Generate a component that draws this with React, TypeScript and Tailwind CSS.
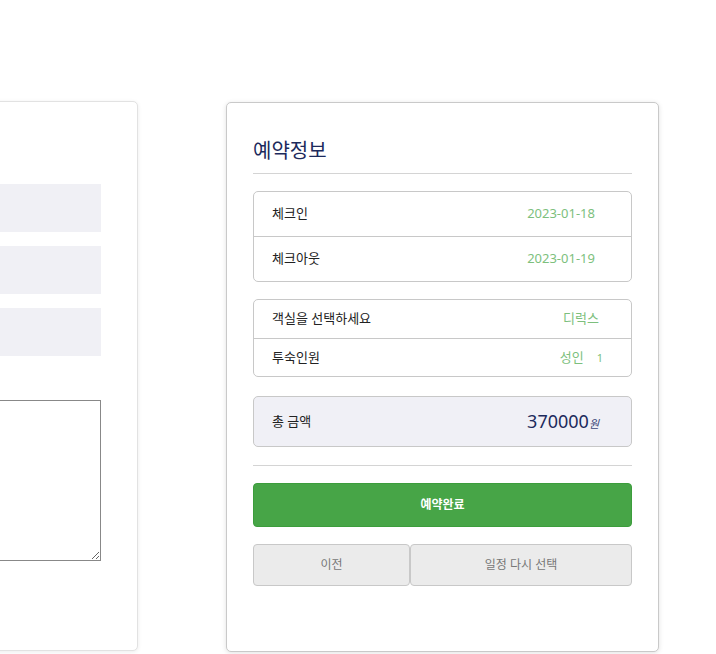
const font = { fontFamily: '"Noto Sans", "Noto Sans CJK KR", sans-serif' };

function InfoRow({ label, children, last }: { label: string; children: React.ReactNode; last?: boolean }) {
  return (
    <div className={`flex items-center justify-between pl-[18px] pr-[36px] ${last ? 'h-[44px]' : 'h-[45px] border-b border-[#c8c8c8]'}`}>
      <span className="text-[13px] text-[#222]">{label}</span>
      <span className="text-[13px] text-[#7dbf7d]">{children}</span>
    </div>
  );
}

function GuestForm() {
  return (
    <div className="w-[400px] h-[550px] ml-[-262px] shrink-0 bg-white border border-[#e2e2e2] rounded-[5px] shadow-[0_1px_4px_rgba(0,0,0,0.08)] pt-[82px] pr-[36px]">
      <div className="flex flex-col gap-[14px]">
        <div className="h-[48px] bg-[#f0f0f5]" />
        <div className="h-[48px] bg-[#f0f0f5]" />
        <div className="h-[48px] bg-[#f0f0f5]" />
      </div>
      <textarea className="mt-[44px] w-full h-[161px] block border border-[#888] bg-white" />
    </div>
  );
}

function Summary() {
  return (
    <div className="w-[433px] h-[550px] shrink-0 bg-white border border-[#c9c9c9] rounded-[5px] shadow-[0_1px_5px_rgba(0,0,0,0.12)] px-[26px] pt-[33px]">
      <h2 className="text-[20px] leading-[30px] text-[#1c2a5c] pb-[7px] border-b border-[#d4d4d4]">예약정보</h2>

      <div className="mt-[17px] border border-[#c8c8c8] rounded-[5px]">
        <InfoRow label="체크인">2023-01-18</InfoRow>
        <InfoRow label="체크아웃" last>2023-01-19</InfoRow>
      </div>

      <div className="mt-[17px] border border-[#c8c8c8] rounded-[5px]">
        <div className="flex items-center justify-between pl-[18px] pr-[32px] h-[39px] border-b border-[#c8c8c8]">
          <span className="text-[13px] text-[#222]">객실을 선택하세요</span>
          <span className="text-[13px] text-[#7dbf7d]">디럭스</span>
        </div>
        <div className="flex items-center justify-between pl-[18px] pr-[28px] h-[37px]">
          <span className="text-[13px] text-[#222]">투숙인원</span>
          <span className="text-[13px] text-[#7dbf7d]">
            성인<span className="ml-[13px] text-[11px]">1</span>
          </span>
        </div>
      </div>

      <div className="mt-[19px] h-[51px] flex items-center justify-between pl-[18px] pr-[32px] bg-[#f0f0f6] border border-[#c8c8c8] rounded-[5px]">
        <span className="text-[13px] text-[#222]">총 금액</span>
        <span className="flex items-baseline">
          <span className="text-[18px] text-[#1c2a5c]">370000</span>
          <span className="text-[11px] italic text-[#3a4677]">원</span>
        </span>
      </div>

      <div className="mt-[18px] border-b border-[#d4d4d4]" />

      <button className="mt-[17px] w-full h-[44px] bg-[#47a547] border border-[#3c9d3c] rounded-[4px] text-white text-[12px] font-bold">
        예약완료
      </button>

      <div className="mt-[17px] flex">
        <button className="w-[157px] h-[42px] bg-[#ebebeb] border border-[#c8c8c8] rounded-[4px] text-[12px] text-[#777]">
          이전
        </button>
        <button className="flex-1 h-[42px] bg-[#ebebeb] border border-[#c8c8c8] rounded-[4px] text-[12px] text-[#777]">
          일정 다시 선택
        </button>
      </div>
    </div>
  );
}

export default function App() {
  return (
    <div className="w-[716px] h-[654px] overflow-hidden bg-white" style={font}>
      <div className="flex items-start gap-[88px] pt-[101px]">
        <GuestForm />
        <div className="mt-[1px]">
          <Summary />
        </div>
      </div>
    </div>
  );
}
